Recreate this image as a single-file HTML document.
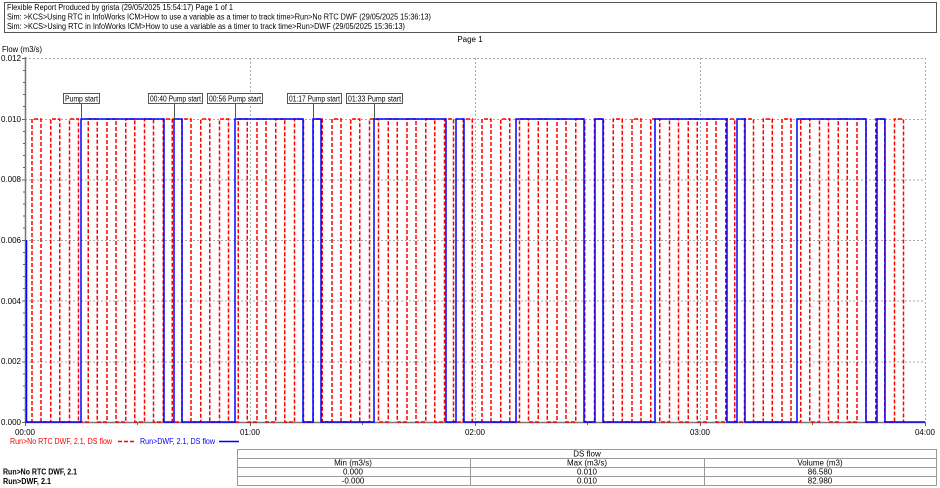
<!DOCTYPE html>
<html><head><meta charset="utf-8"><style>
body{margin:0;background:#fff;width:940px;height:488px;overflow:hidden}
svg{display:block}
text{font-family:"Liberation Sans",sans-serif;font-size:8px;fill:#000}
</style></head><body>
<svg width="940" height="488" viewBox="0 0 940 488" xmlns="http://www.w3.org/2000/svg">
<rect x="4.5" y="2.5" width="932" height="30" fill="#fff" stroke="#555"/>
<text x="7" y="10" textLength="226" lengthAdjust="spacingAndGlyphs">Flexible Report Produced by grista (29/05/2025 15:54:17) Page 1 of 1</text>
<text x="7" y="19.5" textLength="424" lengthAdjust="spacingAndGlyphs">Sim: &gt;KCS&gt;Using RTC in InfoWorks ICM&gt;How to use a variable as a timer to track time&gt;Run&gt;No RTC DWF (29/05/2025 15:36:13)</text>
<text x="7" y="29" textLength="398" lengthAdjust="spacingAndGlyphs">Sim: &gt;KCS&gt;Using RTC in InfoWorks ICM&gt;How to use a variable as a timer to track time&gt;Run&gt;DWF (29/05/2025 15:36:13)</text>
<text x="470" y="42" text-anchor="middle">Page 1</text>
<text x="2" y="52" textLength="40" lengthAdjust="spacingAndGlyphs">Flow (m3/s)</text>
<g stroke="#aaa" stroke-dasharray="2,2" stroke-width="1">
<path d="M25 58.5H925M25 119.5H925M25 180H925M25 240.5H925M25 301H925M25 362H925"/>
<path d="M250.5 58V422M475.5 58V422M700.5 58V422M925.5 58V422"/>
</g>
<g font-size="8">
<text x="21" y="61" text-anchor="end">0.012</text>
<text x="21" y="122" text-anchor="end">0.010</text>
<text x="21" y="182" text-anchor="end">0.008</text>
<text x="21" y="243" text-anchor="end">0.006</text>
<text x="21" y="304" text-anchor="end">0.004</text>
<text x="21" y="364" text-anchor="end">0.002</text>
<text x="21" y="425" text-anchor="end">0.000</text>
<text x="25" y="435" text-anchor="middle">00:00</text>
<text x="250" y="435" text-anchor="middle">01:00</text>
<text x="475" y="435" text-anchor="middle">02:00</text>
<text x="700" y="435" text-anchor="middle">03:00</text>
<text x="925" y="435" text-anchor="middle">04:00</text>
</g>
<path d="M25.5 57V423M25 422.5H926" stroke="#777" stroke-width="1.5" fill="none"/>
<path d="M22 58.5h3M22 119.5h3M22 180h3M22 240.5h3M22 301h3M22 362h3M22 422.5h3M23 70.5h2M23 82.5h2M23 94.5h2M23 106.5h2M23 131.5h2M23 143.5h2M23 155.5h2M23 167.5h2M23 192h2M23 204h2M23 216h2M23 228h2M23 252.5h2M23 264.5h2M23 276.5h2M23 288.5h2M23 313h2M23 325h2M23 337h2M23 349h2M23 374h2M23 386h2M23 398h2M23 410h2M25.5 422v4M137.5 422v3M250.5 422v4M362.5 422v3M475.5 422v4M587.5 422v3M700.5 422v4M812.5 422v3M925.5 422v4" stroke="#666" fill="none"/>
<path fill="none" stroke="#f00" stroke-width="1.5" stroke-dasharray="4,2" d="M25 422h7V119h9V422h9.75V119h9V422h9.75V119h9V422h9.75V119h9V422h9.75V119h9V422h9.75V119h9V422h9.75V119h9V422h9.75V119h9V422h9.75V119h9V422h9.75V119h9V422h9.75V119h9V422h9.75V119h9V422h9.75V119h9V422h9.75V119h9V422h9.75V119h9V422h9.75V119h9V422h9.75V119h9V422h9.75V119h9V422h9.75V119h9V422h9.75V119h9V422h9.75V119h9V422h9.75V119h9V422h9.75V119h9V422h9.75V119h9V422h9.75V119h9V422h9.75V119h9V422h9.75V119h9V422h9.75V119h9V422h9.75V119h9V422h9.75V119h9V422h9.75V119h9V422h9.75V119h9V422h9.75V119h9V422h9.75V119h9V422h9.75V119h9V422h9.75V119h9V422h9.75V119h9V422h9.75V119h9V422h9.75V119h9V422h9.75V119h9V422h9.75V119h9V422h9.75V119h9V422h9.75V119h9V422h9.75V119h9V422h9.75V119h9V422h9.75V119h9V422h9.75V119h9V422"/>
<path fill="none" stroke="#00f" stroke-width="1.5" d="M26.5 240V422H81V119H164V422H174V119H182V422H235V119H303V422H313V119H321V422H374V119H446V422H456V119H464V422H516V119H584V422H595V119H603V422H655V119H727V422H737V119H745V422H797V119H866V422H877V119H885V422H925"/>
<g stroke="#555" fill="#fff">
<path d="M81.5 103V119M174.5 103V119M235.5 103V119M313.5 103V119M374.5 103V119" fill="none"/>
<rect x="63.5" y="93.5" width="36" height="10"/>
<rect x="148.5" y="93.5" width="54" height="10"/>
<rect x="207.5" y="93.5" width="55" height="10"/>
<rect x="287.5" y="93.5" width="54" height="10"/>
<rect x="346.5" y="93.5" width="56" height="10"/>
</g>
<text x="65" y="101.5" textLength="33" lengthAdjust="spacingAndGlyphs">Pump start</text>
<text x="150" y="101.5" textLength="51" lengthAdjust="spacingAndGlyphs">00:40 Pump start</text>
<text x="209" y="101.5" textLength="52" lengthAdjust="spacingAndGlyphs">00:56 Pump start</text>
<text x="289" y="101.5" textLength="51" lengthAdjust="spacingAndGlyphs">01:17 Pump start</text>
<text x="348" y="101.5" textLength="53" lengthAdjust="spacingAndGlyphs">01:33 Pump start</text>
<text x="10" y="444" style="fill:#f00" textLength="102" lengthAdjust="spacingAndGlyphs">Run&gt;No RTC DWF, 2.1, DS flow</text>
<path d="M118 441.5H136" stroke="#f00" stroke-width="1.5" stroke-dasharray="4,2"/>
<text x="140" y="444" style="fill:#00f" textLength="75" lengthAdjust="spacingAndGlyphs">Run&gt;DWF, 2.1, DS flow</text>
<path d="M219 441.5H239" stroke="#00f" stroke-width="1.5"/>
<g fill="none" stroke="#999">
<rect x="237.5" y="449.5" width="699" height="36"/>
<path d="M237 458.5H937M237 467.5H937M237 476.5H937M470.5 458V486M704.5 458V486"/>
</g>
<g text-anchor="middle">
<text x="587" y="456.5">DS flow</text>
<text x="353" y="465.5">Min (m3/s)</text>
<text x="587" y="465.5">Max (m3/s)</text>
<text x="820" y="465.5">Volume (m3)</text>
<text x="353" y="474.5">0.000</text>
<text x="587" y="474.5">0.010</text>
<text x="820" y="474.5">86.580</text>
<text x="353" y="483.5">-0.000</text>
<text x="587" y="483.5">0.010</text>
<text x="820" y="483.5">82.980</text>
</g>
<text x="3" y="474.5" font-weight="bold" textLength="74" lengthAdjust="spacingAndGlyphs">Run&gt;No RTC DWF, 2.1</text>
<text x="3" y="484" font-weight="bold" textLength="48" lengthAdjust="spacingAndGlyphs">Run&gt;DWF, 2.1</text>
</svg>
</body></html>
